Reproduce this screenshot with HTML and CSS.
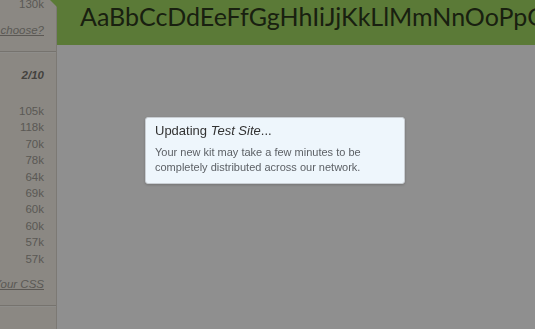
FILE: index.html
```html
<!DOCTYPE html>
<html lang="en">

<head>
    <meta charset="UTF-8">
    <meta name="viewport" content="width=device-width, initial-scale=1.0">
    <title>Kit Editor</title>
    <link rel="stylesheet" href="styles.css">
</head>

<body>
    <div class="page">
        <div class="sidebar">
            <div class="sidebar-inner">
                <div class="size">130k</div>
                <a class="side-link" href="#">Why choose?</a>
                <div class="divider"></div>
                <div class="count">2/10</div>
                <ul class="sizes">
                    <li>105k</li>
                    <li>118k</li>
                    <li>70k</li>
                    <li>78k</li>
                    <li>64k</li>
                    <li>69k</li>
                    <li>60k</li>
                    <li>60k</li>
                    <li>57k</li>
                    <li>57k</li>
                </ul>
                <a class="side-link css-link" href="#">Your CSS</a>
                <div class="divider last"></div>
            </div>
        </div>

        <div class="main">
            <span class="corner"></span>
            <div class="specimen">
                <p>AaBbCcDdEeFfGgHhIiJjKkLlMmNnOoPpGgQqRr</p>
            </div>
        </div>
    </div>

    <!-- publishing overlay -->
    <div class="overlay">
        <div class="dialog">
            <h3>Updating <em>Test Site</em>...</h3>
            <p>Your new kit may take a few minutes to be completely distributed across our network.</p>
        </div>
    </div>
</body>

</html>
```

FILE: styles.css
```css
body {
    font-family: "Liberation Sans", Arial, sans-serif;
    background-color: #ffffff;
    margin: 0;
    padding: 0;
    height: 100vh;
    overflow: hidden;
}

.page {
    display: flex;
    height: 100vh;
}

.sidebar {
    width: 56px;
    flex-shrink: 0;
    background-color: #f8f3ea;
    border-right: 1px solid #ddd8cf;
    overflow: hidden;
}

/* the column is wider than what shows, so long labels get clipped on the left */
.sidebar-inner {
    width: 120px;
    margin-left: -64px;
    margin-top: -4px;
    text-align: right;
    font-size: 11.5px;
    color: #a29e97;
}

.size {
    line-height: 16px;
    padding-right: 12px;
}

.side-link {
    display: block;
    margin-top: 10px;
    line-height: 16px;
    padding-right: 12px;
    color: #a29e97;
    font-style: italic;
    white-space: nowrap;
}

.divider {
    margin-top: 13px;
    border-top: 1px solid #d3cec5;
    border-bottom: 1px solid #fdfbf7;
}

.count {
    margin-top: 14px;
    line-height: 16px;
    padding-right: 12px;
    font-style: italic;
    font-weight: bold;
    color: #7a7771;
}

.sizes {
    list-style: none;
    margin: 20px 0 0;
    padding: 0 12px 0 0;
}

.sizes li {
    line-height: 16.4px;
}

.css-link {
    margin-top: 9px;
}

.divider.last {
    margin-top: 13px;
}

.main {
    position: relative;
    flex: 1;
    background-color: #ffffff;
}

.main .corner {
    position: absolute;
    left: -7px;
    top: 0;
    border-top: 7px solid #a3da62;
    border-left: 7px solid transparent;
}

.specimen {
    height: 45px;
    background-color: #a3da62;
    padding-left: 23px;
    overflow: hidden;
}

.specimen p {
    margin: 0;
    font-family: Lato, "DejaVu Sans", sans-serif;
    font-size: 25px;
    line-height: 32px;
    color: #2e391d;
    white-space: nowrap;
}

.overlay {
    position: fixed;
    top: 0;
    left: 0;
    right: 0;
    bottom: 0;
    background-color: rgba(0, 0, 0, 0.44);
}

.dialog {
    position: absolute;
    left: 145px;
    top: 117px;
    width: 240px;
    padding: 5px 9px 8px;
    background-color: #eef6fc;
    border: 1px solid #c9ced3;
    border-radius: 3px;
    box-shadow: 0 1px 3px rgba(0, 0, 0, 0.2);
}

.dialog h3 {
    margin: 0;
    font-size: 13px;
    font-weight: normal;
    line-height: 16px;
    color: #333333;
}

.dialog p {
    margin: 6px 0 0;
    font-size: 11px;
    line-height: 15px;
    color: #5d6166;
}
```
